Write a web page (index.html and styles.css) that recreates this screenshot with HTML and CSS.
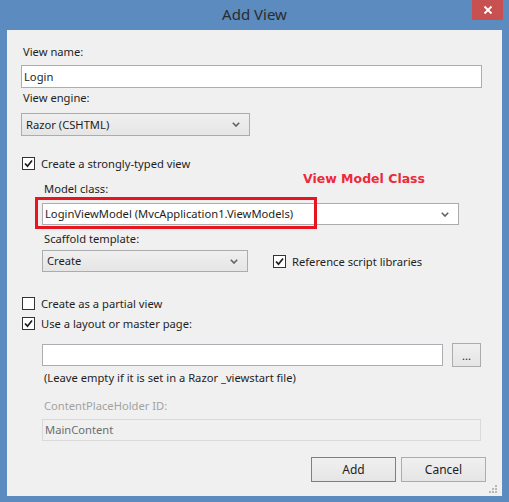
FILE: index.html
```html
<!DOCTYPE html>
<html lang="en">
<head>
    <meta name="viewport" content="width=device-width, initial-scale=1.0">
    <title>Add View</title>
    <link rel="stylesheet" href="styles.css">
</head>
<body>
    <div class="window">
        <header class="titlebar">
            <span class="title">Add View</span>
            <span class="close-btn">
                <svg width="10" height="10" viewBox="0 0 10 10"><path d="M1.5 1.5 L8.5 8.5 M8.5 1.5 L1.5 8.5" stroke="#fff" stroke-width="1.8"/></svg>
            </span>
        </header>

        <section class="client">
            <div class="label r-name">View name:</div>
            <div class="textbox full r-name-box">Login</div>

            <div class="label r-engine">View engine:</div>
            <div class="select engine r-engine-box">
                <span>Razor (CSHTML)</span>
                <svg class="chev" width="8" height="5" viewBox="0 0 8 5"><path d="M0.8 0.8 L4 4 L7.2 0.8" fill="none" stroke="#606060" stroke-width="1.6"/></svg>
            </div>

            <div class="check-row r-typed">
                <span class="check"><svg width="11" height="11" viewBox="0 0 11 11"><path d="M2 5.5 L4.5 8.2 L9 2.5" fill="none" stroke="#1e1e1e" stroke-width="1.7"/></svg></span>
                <span>Create a strongly-typed view</span>
            </div>

            <div class="indent">
                <div class="label r-model">Model class:</div>
                <div class="model-wrap r-model-box">
                    <div class="select model">
                        <span>LoginViewModel (MvcApplication1.ViewModels)</span>
                        <svg class="chev" width="8" height="5" viewBox="0 0 8 5"><path d="M0.8 0.8 L4 4 L7.2 0.8" fill="none" stroke="#606060" stroke-width="1.6"/></svg>
                    </div>
                    <div class="highlight"></div>
                    <div class="note">View Model Class</div>
                </div>

                <div class="label r-scaffold">Scaffold template:</div>
                <div class="scaffold-row r-scaffold-box">
                    <div class="select scaffold">
                        <span>Create</span>
                        <svg class="chev" width="8" height="5" viewBox="0 0 8 5"><path d="M0.8 0.8 L4 4 L7.2 0.8" fill="none" stroke="#606060" stroke-width="1.6"/></svg>
                    </div>
                    <div class="check-row">
                        <span class="check"><svg width="11" height="11" viewBox="0 0 11 11"><path d="M2 5.5 L4.5 8.2 L9 2.5" fill="none" stroke="#1e1e1e" stroke-width="1.7"/></svg></span>
                        <span>Reference script libraries</span>
                    </div>
                </div>
            </div>

            <div class="check-row r-partial">
                <span class="check"></span>
                <span>Create as a partial view</span>
            </div>
            <div class="check-row r-layout">
                <span class="check"><svg width="11" height="11" viewBox="0 0 11 11"><path d="M2 5.5 L4.5 8.2 L9 2.5" fill="none" stroke="#1e1e1e" stroke-width="1.7"/></svg></span>
                <span>Use a layout or master page:</span>
            </div>

            <div class="indent">
                <div class="layout-row r-layout-box">
                    <div class="textbox layout"></div>
                    <div class="btn browse">...</div>
                </div>
                <div class="label r-hint">(Leave empty if it is set in a Razor _viewstart file)</div>
                <div class="label disabled r-holder">ContentPlaceHolder ID:</div>
                <div class="textbox holder r-holder-box">MainContent</div>
            </div>

            <div class="buttons">
                <div class="btn default">Add</div>
                <div class="btn">Cancel</div>
            </div>

            <svg class="grip" width="9" height="9" viewBox="0 0 9 9">
                <rect x="6" y="0" width="2" height="2" fill="#b8b8b8"/>
                <rect x="3" y="3" width="2" height="2" fill="#b8b8b8"/>
                <rect x="6" y="3" width="2" height="2" fill="#b8b8b8"/>
                <rect x="0" y="6" width="2" height="2" fill="#b8b8b8"/>
                <rect x="3" y="6" width="2" height="2" fill="#b8b8b8"/>
                <rect x="6" y="6" width="2" height="2" fill="#b8b8b8"/>
            </svg>
        </section>
    </div>
</body>
</html>
```

FILE: styles.css
```css
*{
    margin: 0;
    padding: 0;
    box-sizing: border-box;
}
body{
    width: 509px;
    height: 502px;
    background-color: #5b8bbf;
    font-family: "Noto Sans", "Open Sans", sans-serif;
    font-size: 11.2px;
    color: #1e1e1e;
    overflow: hidden;
}
.window{
    width: 509px;
    height: 502px;
}
.titlebar{
    height: 30px;
    position: relative;
    display: flex;
    justify-content: center;
    align-items: center;
}
.title{
    font-size: 15px;
    color: #2b2b2b;
    padding-bottom: 3px;
}
.close-btn{
    position: absolute;
    top: 0;
    right: 6px;
    width: 31px;
    height: 20px;
    background-color: #c75050;
    display: flex;
    justify-content: center;
    align-items: center;
}
.client{
    position: relative;
    margin: 0 7px;
    height: 466px;
    background-color: #f0f0f0;
    padding: 14px 20px 0 14px;
}
.label{
    height: 16px;
    line-height: 16px;
    padding-left: 2px;
    white-space: nowrap;
}
.label.disabled{
    color: #a2a2a2;
}
.textbox{
    height: 23px;
    line-height: 21px;
    background-color: #fff;
    border: 1px solid #abadb3;
    padding-left: 2px;
}
.select{
    height: 23px;
    line-height: 21px;
    border: 1px solid #acacac;
    background: linear-gradient(#f0f0f0, #e5e5e5);
    padding-left: 4px;
    display: flex;
    justify-content: space-between;
    align-items: center;
    padding-right: 9px;
}
.chev{
    flex-shrink: 0;
}
.engine{
    width: 229px;
}
.check-row{
    height: 16px;
    display: flex;
    align-items: center;
    gap: 6px;
    white-space: nowrap;
}
.check{
    width: 13px;
    height: 13px;
    margin-left: 1px;
    border: 1px solid #333;
    background-color: #fff;
    display: flex;
    justify-content: center;
    align-items: center;
}
.indent{
    padding-left: 21px;
}
.model-wrap{
    position: relative;
}
.model{
    width: 417px;
    height: 22px;
    line-height: 20px;
    background: #fff;
    padding-left: 2px;
}
.highlight{
    position: absolute;
    left: -7px;
    top: -6px;
    width: 282px;
    height: 32px;
    border: 3px solid #e8141f;
}
.note{
    position: absolute;
    left: 261px;
    top: -32px;
    font-family: "DejaVu Sans", sans-serif;
    font-weight: bold;
    font-size: 12.5px;
    color: #ec2a3a;
}
.scaffold-row{
    display: flex;
    align-items: center;
    gap: 24px;
}
.scaffold{
    width: 206px;
    height: 22px;
    line-height: 20px;
}
.layout-row{
    display: flex;
    align-items: center;
    gap: 9px;
}
.layout{
    width: 401px;
    height: 22px;
}
.holder{
    width: 439px;
    height: 22px;
    line-height: 20px;
    background-color: #f0f0f0;
    border-color: #d9d9d9;
    color: #6d6d6d;
}
.btn{
    width: 85px;
    height: 25px;
    border: 1px solid #acacac;
    background: linear-gradient(#f0f0f0, #e5e5e5);
    display: flex;
    justify-content: center;
    align-items: center;
    font-size: 12px;
}
.btn.default{
    border-color: #3c8ee0;
}
.browse{
    width: 29px;
    height: 24px;
    font-size: 11px;
}
.buttons{
    display: flex;
    justify-content: flex-end;
    gap: 5px;
    margin-right: -4px;
    margin-top: 16px;
}
.grip{
    position: absolute;
    right: 4px;
    bottom: 2px;
}

/* vertical spacing, row by row */
.r-name-box{ margin-top: 5px; }
.r-engine{ margin-top: 2px; }
.r-engine-box{ margin-top: 7px; }
.r-typed{ margin-top: 19px; }
.r-model{ margin-top: 10px; }
.r-model-box{ margin-top: 6px; }
.r-scaffold{ margin-top: 6px; }
.r-scaffold-box{ margin-top: 3px; }
.r-partial{ margin-top: 23px; }
.r-layout{ margin-top: 4px; }
.r-layout-box{ margin-top: 12px; }
.r-hint{ margin-top: 3px; }
.r-holder{ margin-top: 12px; }
.r-holder-box{ margin-top: 5px; }
```
